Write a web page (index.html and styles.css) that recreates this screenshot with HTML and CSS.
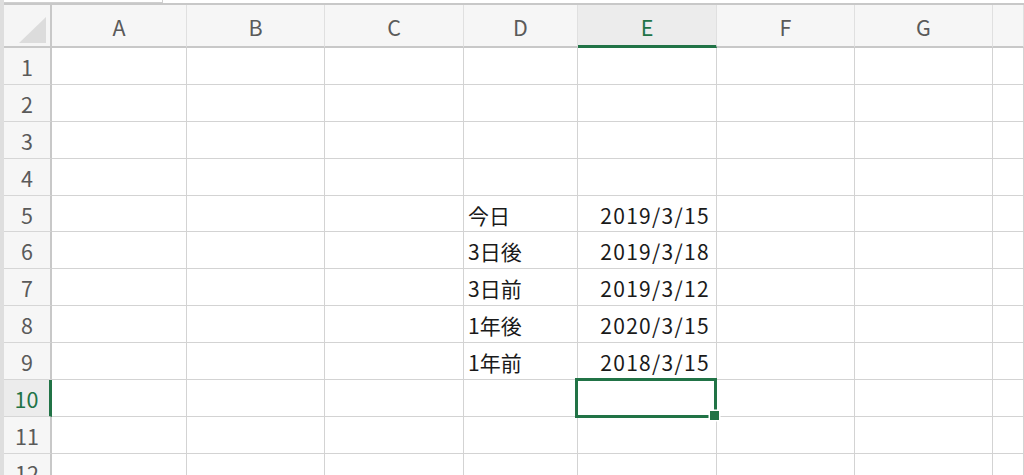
FILE: index.html
```html
<!DOCTYPE html>
<html lang="ja">
<head>
<meta charset="utf-8">
<title>Sheet</title>
<link rel="stylesheet" href="styles.css">
</head>
<body>
<div class="app">
  <div class="topbar"><div class="namebox"></div></div>
  <div class="sheet">
    <div class="corner"><svg class="tri" width="28" height="27" viewBox="0 0 28 27"><polygon points="27,0 27,26 0,26" fill="#dcdcdc"/></svg></div>
    <div class="ch">A</div><div class="ch">B</div><div class="ch">C</div><div class="ch">D</div><div class="ch ch-sel">E</div><div class="ch">F</div><div class="ch">G</div><div class="ch"></div>

    <div class="rh">1</div><div class="c"></div><div class="c"></div><div class="c"></div><div class="c"></div><div class="c"></div><div class="c"></div><div class="c"></div><div class="c"></div>
    <div class="rh">2</div><div class="c"></div><div class="c"></div><div class="c"></div><div class="c"></div><div class="c"></div><div class="c"></div><div class="c"></div><div class="c"></div>
    <div class="rh">3</div><div class="c"></div><div class="c"></div><div class="c"></div><div class="c"></div><div class="c"></div><div class="c"></div><div class="c"></div><div class="c"></div>
    <div class="rh">4</div><div class="c"></div><div class="c"></div><div class="c"></div><div class="c"></div><div class="c"></div><div class="c"></div><div class="c"></div><div class="c"></div>
    <div class="rh">5</div><div class="c"></div><div class="c"></div><div class="c"></div><div class="c txt">今日</div><div class="c num">2019/3/15</div><div class="c"></div><div class="c"></div><div class="c"></div>
    <div class="rh">6</div><div class="c"></div><div class="c"></div><div class="c"></div><div class="c txt">3日後</div><div class="c num">2019/3/18</div><div class="c"></div><div class="c"></div><div class="c"></div>
    <div class="rh">7</div><div class="c"></div><div class="c"></div><div class="c"></div><div class="c txt">3日前</div><div class="c num">2019/3/12</div><div class="c"></div><div class="c"></div><div class="c"></div>
    <div class="rh">8</div><div class="c"></div><div class="c"></div><div class="c"></div><div class="c txt">1年後</div><div class="c num">2020/3/15</div><div class="c"></div><div class="c"></div><div class="c"></div>
    <div class="rh">9</div><div class="c"></div><div class="c"></div><div class="c"></div><div class="c txt">1年前</div><div class="c num">2018/3/15</div><div class="c"></div><div class="c"></div><div class="c"></div>
    <div class="rh rh-sel">10</div><div class="c"></div><div class="c"></div><div class="c"></div><div class="c"></div><div class="c active"><div class="selection"><div class="handle"></div></div></div><div class="c"></div><div class="c"></div><div class="c"></div>
    <div class="rh">11</div><div class="c"></div><div class="c"></div><div class="c"></div><div class="c"></div><div class="c"></div><div class="c"></div><div class="c"></div><div class="c"></div>
    <div class="rh">12</div><div class="c"></div><div class="c"></div><div class="c"></div><div class="c"></div><div class="c"></div><div class="c"></div><div class="c"></div><div class="c"></div>
  </div>
</div>
</body>
</html>
```
FILE: styles.css
```css
html, body {
  margin: 0;
  padding: 0;
  background: #ffffff;
  overflow: hidden;
}
.app {
  width: 1024px;
  height: 475px;
  box-sizing: border-box;
  border-left: 4px solid #dedede;
  overflow: hidden;
  font-family: "Noto Sans CJK JP", "Noto Sans", sans-serif;
}
.topbar {
  height: 5px;
  box-sizing: border-box;
  border-bottom: 2px solid #c8c8c8;
  background: #ffffff;
}
.namebox {
  width: 158px;
  height: 2px;
  border-bottom: 1px solid #cfcfcf;
  border-right: 1px solid #cfcfcf;
}
.sheet {
  display: grid;
  grid-template-columns: 48px 135px 138px 139px 114px 139px 138px 138px 1fr;
  grid-template-rows: 43px repeat(12, 36.9px);
}
.sheet > div {
  box-sizing: border-box;
}
.corner {
  background: #f5f5f5;
  border-right: 2px solid #c8c8c8;
  border-bottom: 2px solid #c8c8c8;
  display: flex;
  align-items: flex-end;
  justify-content: flex-end;
  padding: 0 3px 2px 0;
}
.tri {
  display: block;
}
.ch {
  background: #f6f6f6;
  border-right: 1px solid #e0e0e0;
  border-bottom: 2px solid #c8c8c8;
  display: flex;
  align-items: center;
  justify-content: center;
  color: #5a5a5a;
  font-size: 21.5px;
  padding-top: 2px;
}
.ch-sel {
  background: #ececec;
  color: #217346;
  border-bottom: 3px solid #217346;
}
.rh {
  background: #f6f6f6;
  border-right: 2px solid #c8c8c8;
  border-bottom: 1px solid #d6d6d6;
  display: flex;
  align-items: center;
  justify-content: center;
  color: #5a5a5a;
  font-size: 21.5px;
  padding-top: 1px;
}
.rh-sel {
  background: #ececec;
  color: #217346;
  border-right: 3px solid #217346;
}
.c {
  border-right: 1px solid #d3d3d3;
  border-bottom: 1px solid #d3d3d3;
  display: flex;
  align-items: center;
  font-size: 21px;
  color: #1a1a1a;
  padding-top: 2px;
}
.txt {
  padding-left: 4px;
}
.num {
  justify-content: flex-end;
  padding-right: 6px;
  letter-spacing: 1.3px;
}
.active {
  position: relative;
}
.selection {
  position: absolute;
  top: -2px;
  left: -3px;
  right: -1px;
  bottom: -2px;
  border: 3px solid #217346;
}
.handle {
  position: absolute;
  right: -5px;
  bottom: -5px;
  width: 9px;
  height: 9px;
  background: #217346;
  box-shadow: 0 0 0 1.5px #ffffff;
}
```
